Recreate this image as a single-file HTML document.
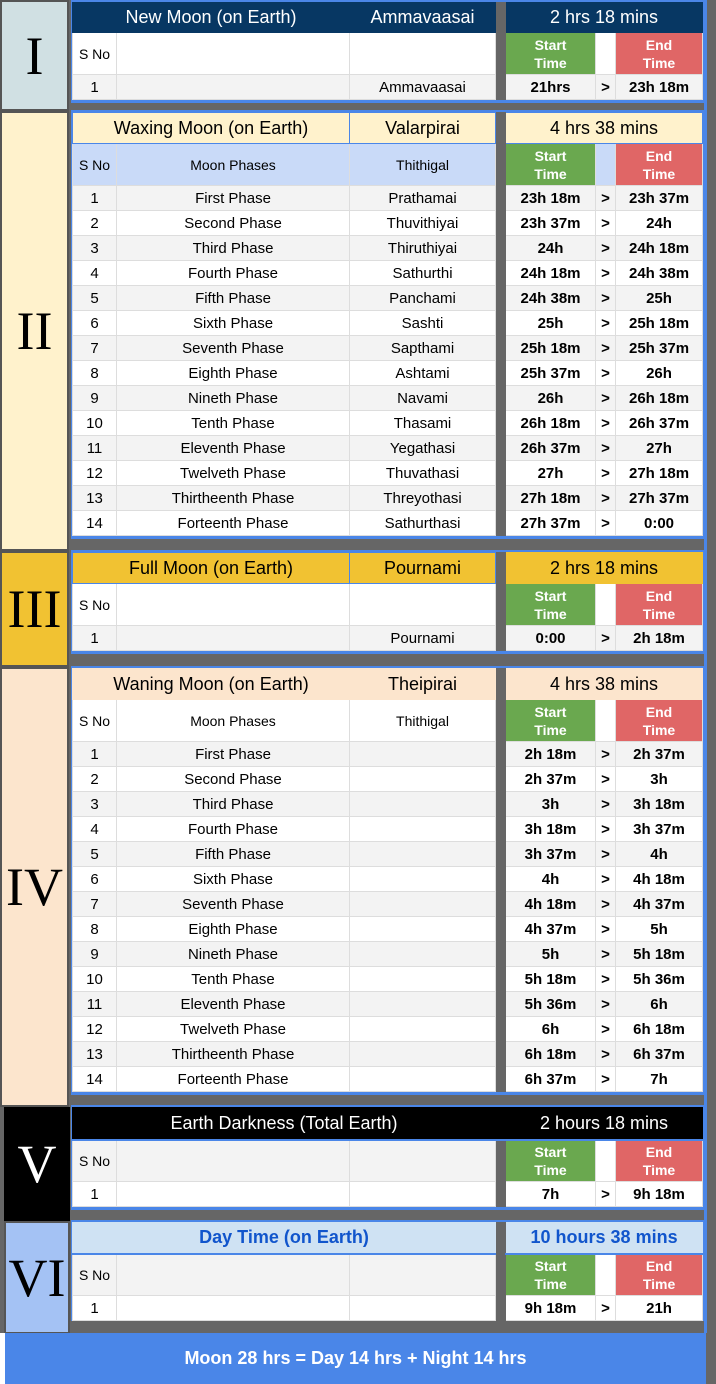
<!DOCTYPE html>
<html><head><meta charset="utf-8"><style>
*{box-sizing:border-box;margin:0;padding:0}
body{width:716px;height:1384px;background:#666;position:relative;overflow:hidden;font-family:"Liberation Sans",Arial,sans-serif;color:#000}
.lab{position:absolute;left:0;width:69px;border:2px solid #555;display:flex;align-items:center;justify-content:center;font-family:"Liberation Serif",serif;font-size:54px;line-height:1}
.sec{position:absolute;left:71px;width:633px;border-top:2px solid #4a86e8;border-bottom:3px solid #4a86e8;border-left:1px solid #4a86e8;border-right:2px solid #4a86e8;background:#fff}
table{border-collapse:collapse;table-layout:fixed;width:630px}
td{border:1px solid #ddd;padding:0;text-align:center;font-size:15px;white-space:nowrap;overflow:hidden;background:#fff}
tr.h td{font-size:18px}
tr.d td{height:25px;background:#fff}
tr.d.a td{background:#f3f3f3}
tr.d td.t{font-weight:bold;font-size:15px}
td.s{background:#6aa84f!important;color:#fff;font-weight:bold;font-size:14px;line-height:18px}
td.e{background:#e06666!important;color:#fff;font-weight:bold;font-size:14px;line-height:18px}
tr.sn td{height:42px}
tr.sn td.n{font-size:14px}
tr.sub td.p{font-size:14px}
td.g{background:#666!important;border-color:#666!important}
</style></head><body>
<div style="position:absolute;left:704px;top:0;width:3px;height:1333px;background:#4a86e8"></div>

<div class="lab" style="top:0;height:111px;background:#d0e0e3">I</div>
<div class="lab" style="top:111px;height:440px;background:#fff2cc">II</div>
<div class="lab" style="top:551px;height:116px;background:#f1c232">III</div>
<div class="lab" style="top:667px;height:440px;background:#fce5cd">IV</div>
<div class="lab" style="top:1107px;left:4px;width:66px;height:114px;background:#000;color:#fff;border-color:#000">V</div>
<div class="lab" style="top:1221px;left:4px;width:66px;height:113px;background:#a4c2f4">VI</div>

<!-- I -->
<div class="sec" style="top:0">
<table><colgroup><col style="width:44px"><col style="width:233px"><col style="width:146px"><col style="width:10px"><col style="width:90px"><col style="width:20px"><col style="width:87px"></colgroup>
<tr class="h" style="height:30px"><td colspan="2" style="background:#073763;color:#fff;border-color:#073763">New Moon (on Earth)</td><td style="background:#073763;color:#fff;border-color:#073763">Ammavaasai</td><td class="g"></td><td colspan="3" style="background:#073763;color:#fff;border-color:#073763">2 hrs 18 mins</td></tr>
<tr class="sn"><td class="n">S No</td><td></td><td></td><td class="g"></td><td class="s">Start<br>Time</td><td></td><td class="e">End<br>Time</td></tr>
<tr class="d a"><td>1</td><td></td><td>Ammavaasai</td><td class="g"></td><td class="t">21hrs</td><td class="t">&gt;</td><td class="t">23h 18m</td></tr>
</table></div>

<!-- II -->
<div class="sec" style="top:110px">
<table><colgroup><col style="width:44px"><col style="width:233px"><col style="width:146px"><col style="width:10px"><col style="width:90px"><col style="width:20px"><col style="width:87px"></colgroup>
<tr class="h" style="height:31px"><td colspan="2" style="background:#fff2cc;border:1px solid #4a86e8">Waxing Moon (on Earth)</td><td style="background:#fff2cc;border:1px solid #4a86e8">Valarpirai</td><td class="g"></td><td colspan="3" style="background:#fff2cc;border:1px solid #4a86e8">4 hrs 38 mins</td></tr>
<tr class="sn sub"><td class="n" style="background:#c9daf8">S No</td><td class="p" style="background:#c9daf8">Moon Phases</td><td class="p" style="background:#c9daf8">Thithigal</td><td class="g"></td><td class="s">Start<br>Time</td><td style="background:#c9daf8"></td><td class="e">End<br>Time</td></tr>
<tr class="d a"><td>1</td><td>First Phase</td><td>Prathamai</td><td class="g"></td><td class="t">23h 18m</td><td class="t">&gt;</td><td class="t">23h 37m</td></tr>
<tr class="d"><td>2</td><td>Second Phase</td><td>Thuvithiyai</td><td class="g"></td><td class="t">23h 37m</td><td class="t">&gt;</td><td class="t">24h</td></tr>
<tr class="d a"><td>3</td><td>Third Phase</td><td>Thiruthiyai</td><td class="g"></td><td class="t">24h</td><td class="t">&gt;</td><td class="t">24h 18m</td></tr>
<tr class="d"><td>4</td><td>Fourth Phase</td><td>Sathurthi</td><td class="g"></td><td class="t">24h 18m</td><td class="t">&gt;</td><td class="t">24h 38m</td></tr>
<tr class="d a"><td>5</td><td>Fifth Phase</td><td>Panchami</td><td class="g"></td><td class="t">24h 38m</td><td class="t">&gt;</td><td class="t">25h</td></tr>
<tr class="d"><td>6</td><td>Sixth Phase</td><td>Sashti</td><td class="g"></td><td class="t">25h</td><td class="t">&gt;</td><td class="t">25h 18m</td></tr>
<tr class="d a"><td>7</td><td>Seventh Phase</td><td>Sapthami</td><td class="g"></td><td class="t">25h 18m</td><td class="t">&gt;</td><td class="t">25h 37m</td></tr>
<tr class="d"><td>8</td><td>Eighth Phase</td><td>Ashtami</td><td class="g"></td><td class="t">25h 37m</td><td class="t">&gt;</td><td class="t">26h</td></tr>
<tr class="d a"><td>9</td><td>Nineth Phase</td><td>Navami</td><td class="g"></td><td class="t">26h</td><td class="t">&gt;</td><td class="t">26h 18m</td></tr>
<tr class="d"><td>10</td><td>Tenth Phase</td><td>Thasami</td><td class="g"></td><td class="t">26h 18m</td><td class="t">&gt;</td><td class="t">26h 37m</td></tr>
<tr class="d a"><td>11</td><td>Eleventh Phase</td><td>Yegathasi</td><td class="g"></td><td class="t">26h 37m</td><td class="t">&gt;</td><td class="t">27h</td></tr>
<tr class="d"><td>12</td><td>Twelveth Phase</td><td>Thuvathasi</td><td class="g"></td><td class="t">27h</td><td class="t">&gt;</td><td class="t">27h 18m</td></tr>
<tr class="d a"><td>13</td><td>Thirtheenth Phase</td><td>Threyothasi</td><td class="g"></td><td class="t">27h 18m</td><td class="t">&gt;</td><td class="t">27h 37m</td></tr>
<tr class="d"><td>14</td><td>Forteenth Phase</td><td>Sathurthasi</td><td class="g"></td><td class="t">27h 37m</td><td class="t">&gt;</td><td class="t">0:00</td></tr>
</table></div>

<!-- III -->
<div class="sec" style="top:550px">
<table><colgroup><col style="width:44px"><col style="width:233px"><col style="width:146px"><col style="width:10px"><col style="width:90px"><col style="width:20px"><col style="width:87px"></colgroup>
<tr class="h" style="height:31px"><td colspan="2" style="background:#f1c232;border-color:#4a86e8">Full Moon (on Earth)</td><td style="background:#f1c232;border-color:#4a86e8">Pournami</td><td class="g"></td><td colspan="3" style="background:#f1c232;border-color:#f1c232">2 hrs 18 mins</td></tr>
<tr class="sn"><td class="n">S No</td><td></td><td></td><td class="g"></td><td class="s">Start<br>Time</td><td></td><td class="e">End<br>Time</td></tr>
<tr class="d a"><td>1</td><td></td><td>Pournami</td><td class="g"></td><td class="t">0:00</td><td class="t">&gt;</td><td class="t">2h 18m</td></tr>
</table></div>

<!-- IV -->
<div class="sec" style="top:666px">
<table><colgroup><col style="width:44px"><col style="width:233px"><col style="width:146px"><col style="width:10px"><col style="width:90px"><col style="width:20px"><col style="width:87px"></colgroup>
<tr class="h" style="height:31px"><td colspan="2" style="background:#fce5cd;border-color:#fce5cd">Waning Moon (on Earth)</td><td style="background:#fce5cd;border-color:#fce5cd">Theipirai</td><td class="g"></td><td colspan="3" style="background:#fce5cd;border-color:#fce5cd">4 hrs 38 mins</td></tr>
<tr class="sn sub"><td class="n">S No</td><td class="p">Moon Phases</td><td class="p">Thithigal</td><td class="g"></td><td class="s">Start<br>Time</td><td></td><td class="e">End<br>Time</td></tr>
<tr class="d a"><td>1</td><td>First Phase</td><td></td><td class="g"></td><td class="t">2h 18m</td><td class="t">&gt;</td><td class="t">2h 37m</td></tr>
<tr class="d"><td>2</td><td>Second Phase</td><td></td><td class="g"></td><td class="t">2h 37m</td><td class="t">&gt;</td><td class="t">3h</td></tr>
<tr class="d a"><td>3</td><td>Third Phase</td><td></td><td class="g"></td><td class="t">3h</td><td class="t">&gt;</td><td class="t">3h 18m</td></tr>
<tr class="d"><td>4</td><td>Fourth Phase</td><td></td><td class="g"></td><td class="t">3h 18m</td><td class="t">&gt;</td><td class="t">3h 37m</td></tr>
<tr class="d a"><td>5</td><td>Fifth Phase</td><td></td><td class="g"></td><td class="t">3h 37m</td><td class="t">&gt;</td><td class="t">4h</td></tr>
<tr class="d"><td>6</td><td>Sixth Phase</td><td></td><td class="g"></td><td class="t">4h</td><td class="t">&gt;</td><td class="t">4h 18m</td></tr>
<tr class="d a"><td>7</td><td>Seventh Phase</td><td></td><td class="g"></td><td class="t">4h 18m</td><td class="t">&gt;</td><td class="t">4h 37m</td></tr>
<tr class="d"><td>8</td><td>Eighth Phase</td><td></td><td class="g"></td><td class="t">4h 37m</td><td class="t">&gt;</td><td class="t">5h</td></tr>
<tr class="d a"><td>9</td><td>Nineth Phase</td><td></td><td class="g"></td><td class="t">5h</td><td class="t">&gt;</td><td class="t">5h 18m</td></tr>
<tr class="d"><td>10</td><td>Tenth Phase</td><td></td><td class="g"></td><td class="t">5h 18m</td><td class="t">&gt;</td><td class="t">5h 36m</td></tr>
<tr class="d a"><td>11</td><td>Eleventh Phase</td><td></td><td class="g"></td><td class="t">5h 36m</td><td class="t">&gt;</td><td class="t">6h</td></tr>
<tr class="d"><td>12</td><td>Twelveth Phase</td><td></td><td class="g"></td><td class="t">6h</td><td class="t">&gt;</td><td class="t">6h 18m</td></tr>
<tr class="d a"><td>13</td><td>Thirtheenth Phase</td><td></td><td class="g"></td><td class="t">6h 18m</td><td class="t">&gt;</td><td class="t">6h 37m</td></tr>
<tr class="d"><td>14</td><td>Forteenth Phase</td><td></td><td class="g"></td><td class="t">6h 37m</td><td class="t">&gt;</td><td class="t">7h</td></tr>
</table></div>

<!-- V -->
<div class="sec" style="top:1105px">
<table><colgroup><col style="width:44px"><col style="width:233px"><col style="width:146px"><col style="width:10px"><col style="width:90px"><col style="width:20px"><col style="width:87px"></colgroup>
<tr class="h" style="height:32px"><td colspan="3" style="background:#000;color:#fff;border-color:#000;border-bottom:2px solid #4a86e8">Earth Darkness (Total Earth)</td><td style="background:#000;border-color:#000;border-bottom:2px solid #4a86e8"></td><td colspan="3" style="background:#000;color:#fff;border-color:#000;border-bottom:2px solid #4a86e8">2 hours 18 mins</td></tr>
<tr class="sn"><td class="n" style="background:#f3f3f3">S No</td><td style="background:#f3f3f3"></td><td style="background:#f3f3f3"></td><td class="g"></td><td class="s">Start<br>Time</td><td></td><td class="e">End<br>Time</td></tr>
<tr class="d"><td>1</td><td></td><td></td><td class="g"></td><td class="t">7h</td><td class="t">&gt;</td><td class="t">9h 18m</td></tr>
</table></div>

<!-- VI -->
<div class="sec" style="top:1220px;border-bottom:none">
<table><colgroup><col style="width:44px"><col style="width:233px"><col style="width:146px"><col style="width:10px"><col style="width:90px"><col style="width:20px"><col style="width:87px"></colgroup>
<tr class="h" style="height:31px"><td colspan="3" style="background:#cfe2f3;color:#1155cc;font-weight:bold;border-color:#cfe2f3;border-bottom:2px solid #4a86e8">Day Time (on Earth)</td><td class="g"></td><td colspan="3" style="background:#cfe2f3;color:#1155cc;font-weight:bold;border-color:#cfe2f3;border-bottom:2px solid #4a86e8">10 hours 38 mins</td></tr>
<tr class="sn"><td class="n" style="background:#f3f3f3">S No</td><td style="background:#f3f3f3"></td><td style="background:#f3f3f3"></td><td class="g"></td><td class="s">Start<br>Time</td><td></td><td class="e">End<br>Time</td></tr>
<tr class="d"><td>1</td><td></td><td></td><td class="g"></td><td class="t">9h 18m</td><td class="t">&gt;</td><td class="t">21h</td></tr>
</table></div>

<div style="position:absolute;left:5px;top:1333px;width:701px;height:51px;background:#4a86e8;color:#fff;font-weight:bold;font-size:18px;display:flex;align-items:center;justify-content:center">Moon 28 hrs = Day 14 hrs + Night 14 hrs</div>
<div style="position:absolute;left:0;top:1333px;width:5px;height:51px;background:#fff"></div>
</body></html>
